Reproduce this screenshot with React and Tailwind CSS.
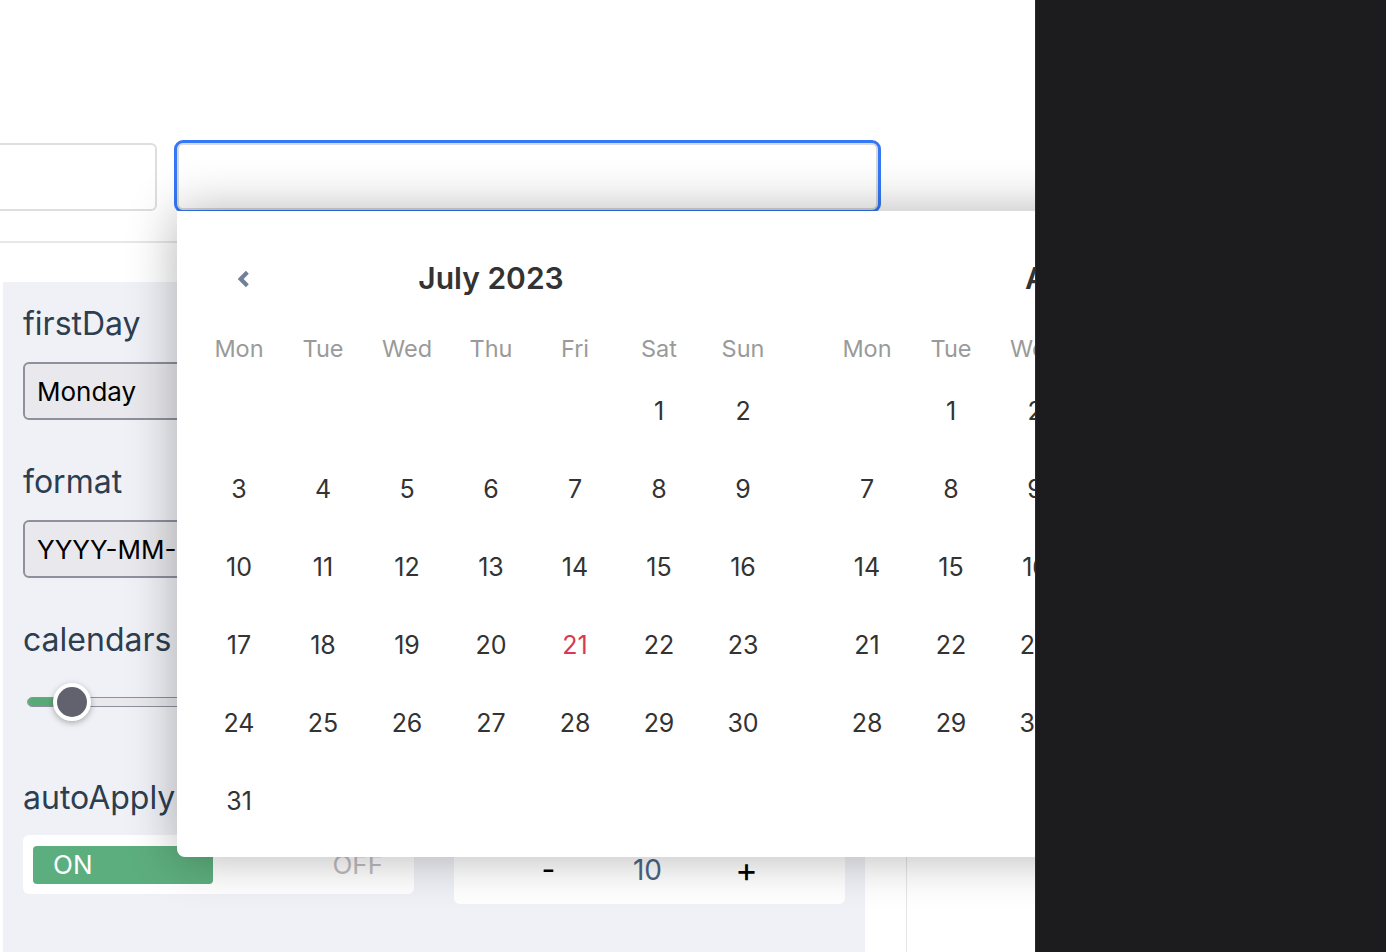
import { useState } from 'react';

const july = [
  [null, null, null, null, null, 1, 2],
  [3, 4, 5, 6, 7, 8, 9],
  [10, 11, 12, 13, 14, 15, 16],
  [17, 18, 19, 20, 21, 22, 23],
  [24, 25, 26, 27, 28, 29, 30],
  [31, null, null, null, null, null, null],
];

const august = [
  [null, 1, 2, 3, 4, 5, 6],
  [7, 8, 9, 10, 11, 12, 13],
  [14, 15, 16, 17, 18, 19, 20],
  [21, 22, 23, 24, 25, 26, 27],
  [28, 29, 30, 31, null, null, null],
];

const weekDays = ['Mon', 'Tue', 'Wed', 'Thu', 'Fri', 'Sat', 'Sun'];

const Month = ({ title, weeks, showPrev, today }) => (
  <div className="w-[588px] shrink-0">
    <div className="grid grid-cols-7 h-[40px] items-center">
      <div className="flex justify-center">
        {showPrev && (
          <svg width="20" height="26" viewBox="0 0 24 24" fill="none" stroke="#718096" strokeWidth="5" strokeLinecap="butt" strokeLinejoin="miter" className="ml-[10px]">
            <path d="M16 4l-8 8 8 8" />
          </svg>
        )}
      </div>
      <div className="col-span-5 text-center text-[30px] font-semibold text-[#333] whitespace-nowrap">{title}</div>
      <div />
    </div>
    <div className="grid grid-cols-7 h-[48px] items-center mt-[29px]">
      {weekDays.map((d) => (
        <div key={d} className="text-center text-[23.5px] text-[#9a9a9a]">{d}</div>
      ))}
    </div>
    {weeks.map((week, i) => (
      <div key={i} className="grid grid-cols-7 h-[78px] items-center">
        {week.map((day, j) => (
          <div key={j} className={`text-center text-[25px] ${day === today ? 'text-[#d93a52]' : 'text-[#333]'}`}>
            {day ?? ''}
          </div>
        ))}
      </div>
    ))}
  </div>
);

const Label = ({ children, className = '' }) => (
  <div className={`text-[32px] leading-[36px] text-[#2c3e50] ${className}`}>{children}</div>
);

const SelectBox = ({ value, className = '' }) => (
  <div className={`h-[58px] bg-[#e9e9ed] border-2 border-[#8f8f9d] rounded-md flex items-center pl-[12px] text-[26px] text-black ${className}`}>
    {value}
  </div>
);

export default function App() {
  const [autoApply] = useState(true);

  return (
    <div className="flex w-[1386px] h-[952px] overflow-hidden" style={{ fontFamily: 'Inter, "Open Sans", sans-serif' }}>
      <div className="relative w-[1035px] h-[952px] overflow-hidden bg-white shrink-0">
        {/* inputs */}
        <div className="flex pt-[143px] gap-[20px]">
          <div className="w-[157px] h-[68px] border-2 border-l-0 border-[#dedede] rounded-r-md bg-white" />
          <div className="w-[701px] h-[67px] border-2 border-[#d9d9d9] rounded-md bg-white outline-[3px] outline-solid outline-[#3478f6]" />
        </div>
        <div className="mt-[30px] w-[906px] border-b-2 border-[#e6e7eb]" />

        <div className="flex mt-[39px]">
          {/* options panel */}
          <div className="ml-[3px] w-[862px] h-[700px] bg-[#f0f1f6] px-[20px] pt-[24px] flex gap-[40px]">
            <div className="w-[391px]">
              <Label>firstDay</Label>
              <SelectBox value="Monday" className="mt-[20px]" />
              <Label className="mt-[44px]">format</Label>
              <SelectBox value="YYYY-MM-DD" className="mt-[20px]" />
              <Label className="mt-[44px]">calendars</Label>
              <div className="relative mt-[26px] h-[36px] flex items-center">
                <div className="ml-[4px] w-[387px] h-[10px] rounded-full border border-[#8f8f9d] bg-[#e9e9ed] overflow-hidden">
                  <div className="w-[44px] h-full bg-[#5aaa78]" />
                </div>
                <div className="absolute left-[30px] top-[-1px] w-[38px] h-[38px] rounded-full bg-[#62626f] border-[4px] border-white shadow-[0_2px_6px_rgba(0,0,0,0.3)]" />
              </div>
              <Label className="mt-[60px]">autoApply</Label>
              <div className="mt-[19px] h-[59px] bg-white rounded-md flex items-center px-[10px]">
                <div className={`w-[180px] h-[38px] rounded ${autoApply ? 'bg-[#5dae7e]' : ''} flex items-center pl-[20px] text-[26px] text-white`}>ON</div>
                <div className="flex-1 text-right pr-[21px] text-[26px] text-[#bdbdbd]">OFF</div>
              </div>
            </div>
            <div className="w-[391px]">
              <Label>minDays</Label>
              <SelectBox value="0" className="mt-[20px]" />
              <Label className="mt-[44px]">maxDays</Label>
              <SelectBox value="0" className="mt-[20px]" />
              <Label className="mt-[44px]">weekNumbers</Label>
              <div className="mt-[26px] h-[36px]" />
              <Label className="mt-[60px]">count</Label>
              <div className="mt-[19px] h-[69px] bg-white rounded-md flex items-center justify-center gap-[66px] pr-[4px]">
                <span className="text-[30px] text-black w-[30px] text-center">-</span>
                <span className="text-[28px] text-[#4c6585] w-[36px] text-center">10</span>
                <span className="text-[34px] text-black w-[30px] text-center">+</span>
              </div>
            </div>
          </div>
          <div className="ml-[41px] h-[700px] border-l border-[#e5e5e5]" />
        </div>

        {/* date picker popup */}
        <div className="absolute left-[177px] top-[211px] w-[1300px] h-[646px] bg-white rounded-b-lg shadow-[0_0_50px_rgba(0,0,0,0.3)] pt-[45px] pl-[20px] flex gap-[40px]">
          <Month title="July 2023" weeks={july} showPrev today={21} />
          <Month title="August 2023" weeks={august} />
        </div>
      </div>
      <div className="flex-1 bg-[#1c1c1e] border-l border-[#2a2a2c]" />
    </div>
  );
}
